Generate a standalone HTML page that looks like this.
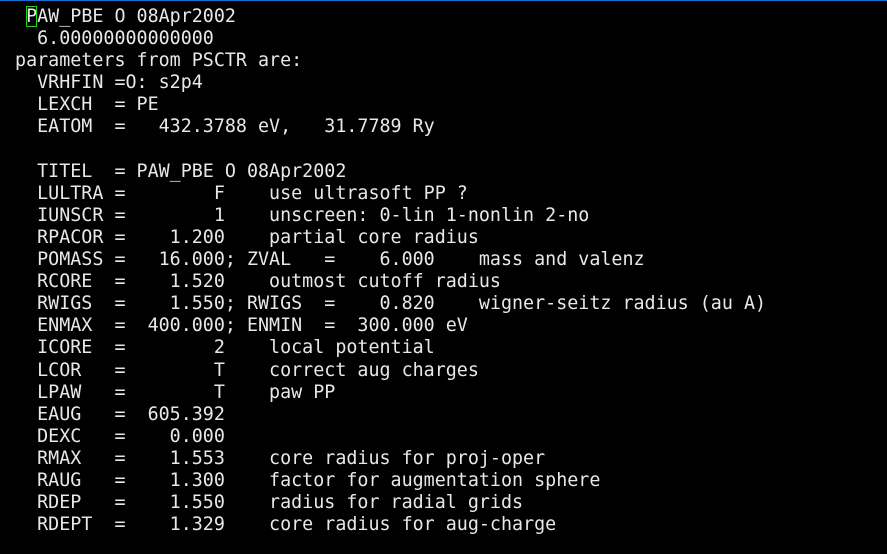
<!DOCTYPE html><html><head><style>
body{margin:0;background:#000;width:887px;height:554px;overflow:hidden;border-top:1px solid #1a6fd0;box-sizing:border-box}
pre{margin:0;position:absolute;left:4px;top:6px;font-family:"DejaVu Sans Mono","Liberation Mono",monospace;font-size:18.35px;line-height:22.1px;color:#e8e8e8}
.c{outline:1.5px solid #1fd31f;outline-offset:-1px}
</style></head><body><pre>  <span class="c">P</span>AW_PBE O 08Apr2002
   6.00000000000000
 parameters from PSCTR are:
   VRHFIN =O: s2p4
   LEXCH  = PE
   EATOM  =   432.3788 eV,   31.7789 Ry

   TITEL  = PAW_PBE O 08Apr2002
   LULTRA =        F    use ultrasoft PP ?
   IUNSCR =        1    unscreen: 0-lin 1-nonlin 2-no
   RPACOR =    1.200    partial core radius
   POMASS =   16.000; ZVAL   =    6.000    mass and valenz
   RCORE  =    1.520    outmost cutoff radius
   RWIGS  =    1.550; RWIGS  =    0.820    wigner-seitz radius (au A)
   ENMAX  =  400.000; ENMIN  =  300.000 eV
   ICORE  =        2    local potential
   LCOR   =        T    correct aug charges
   LPAW   =        T    paw PP
   EAUG   =  605.392
   DEXC   =    0.000
   RMAX   =    1.553    core radius for proj-oper
   RAUG   =    1.300    factor for augmentation sphere
   RDEP   =    1.550    radius for radial grids
   RDEPT  =    1.329    core radius for aug-charge
</pre></body></html>
